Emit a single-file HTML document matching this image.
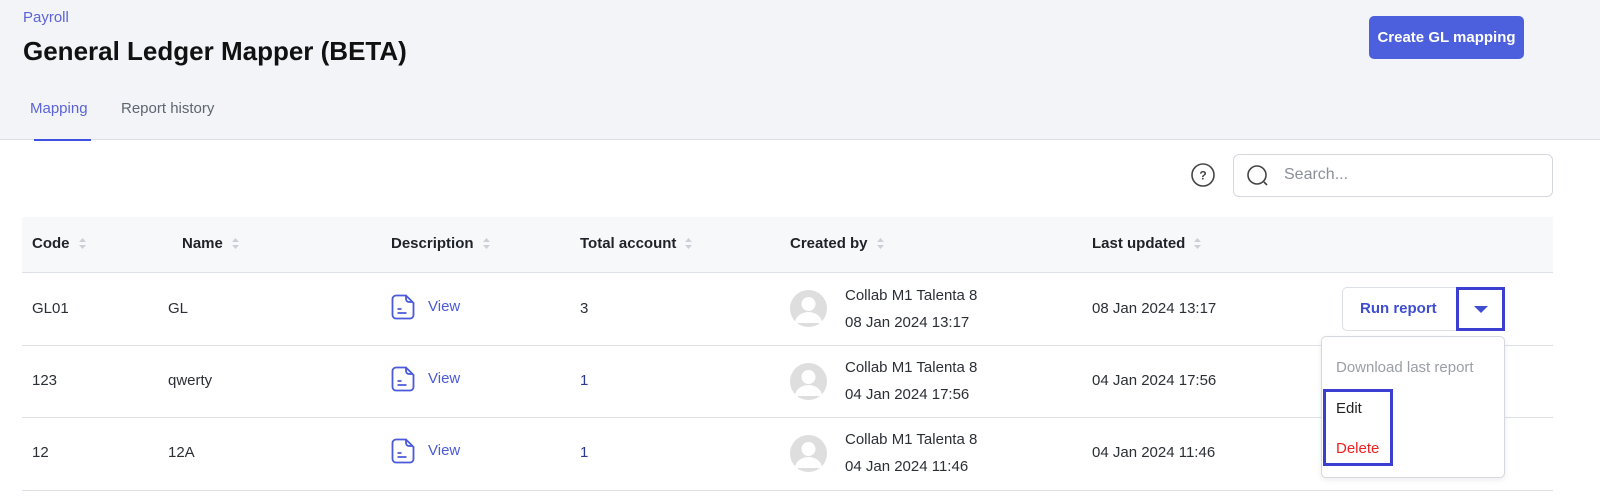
<!DOCTYPE html>
<html><head><meta charset="utf-8"><style>
*{margin:0;padding:0;box-sizing:border-box}
body{width:1600px;height:502px;overflow:hidden;background:#fff;font-family:"Liberation Sans",sans-serif;color:#1f2328;position:relative}
.a{position:absolute;white-space:nowrap}
.hdr{position:absolute;left:0;top:0;width:1600px;height:140px;background:#f2f4f8;border-bottom:1px solid #dcdfe6}
.th{font-weight:bold;font-size:15px;color:#1f2328;top:235px}
.sort{display:inline-block;margin-left:9px;vertical-align:middle;width:7px;height:11px;position:relative;top:-1px}
.td{font-size:15px;color:#2b2f36}
.link{color:#4a5ad9;font-size:15px}
.line{position:absolute;left:22px;width:1531px;height:1px;background:#dde0e6}
</style></head><body>
<div class="hdr"></div>
<div class="a" style="left:23px;top:9px;font-size:15px;color:#5b63d8">Payroll</div>
<div class="a" style="left:23px;top:36px;font-size:26px;font-weight:bold;color:#111">General Ledger Mapper (BETA)</div>
<div class="a" style="left:1369px;top:16px;width:155px;height:43px;background:#4c5fdc;border-radius:5px;color:#fff;font-weight:bold;font-size:15px;line-height:43px;text-align:center">Create GL mapping</div>
<div class="a" style="left:30px;top:100px;font-size:15px;color:#5b63d8">Mapping</div>
<div class="a" style="left:34px;top:139px;width:57px;height:2px;background:#3d52e0"></div>
<div class="a" style="left:121px;top:100px;font-size:15px;color:#5f6570">Report history</div>

<svg class="a" style="left:1191px;top:163px" width="24" height="24" viewBox="0 0 24 24"><circle cx="12" cy="12" r="11" fill="none" stroke="#444" stroke-width="1.6"/><text x="12" y="16.5" text-anchor="middle" font-size="12" font-weight="bold" font-family="Liberation Sans" fill="#444">?</text></svg>
<div class="a" style="left:1233px;top:154px;width:320px;height:43px;border:1px solid #d5d8de;border-radius:6px"></div>
<svg class="a" style="left:1246px;top:164px" width="24" height="24" viewBox="0 0 24 24"><circle cx="11" cy="11" r="9" fill="none" stroke="#444" stroke-width="1.6"/><path d="M18 18l3 3" stroke="#444" stroke-width="1.6"/></svg>
<div class="a" style="left:1284px;top:166px;font-size:16px;color:#8a8f98">Search...</div>

<div class="a" style="left:22px;top:217px;width:1531px;height:55px;background:#f7f8fa"></div>
<div class="line" style="top:272px"></div>
<div class="line" style="top:345px"></div>
<div class="line" style="top:417px"></div>
<div class="line" style="top:490px"></div>

<div class="a th" style="left:32px">Code<svg class="sort" viewBox="0 0 7 11"><path d="M0 4L3.5 0L7 4Z M0 7L3.5 11L7 7Z" fill="#ccd0d6"/></svg></div>
<div class="a th" style="left:182px">Name<svg class="sort" viewBox="0 0 7 11"><path d="M0 4L3.5 0L7 4Z M0 7L3.5 11L7 7Z" fill="#ccd0d6"/></svg></div>
<div class="a th" style="left:391px">Description<svg class="sort" viewBox="0 0 7 11"><path d="M0 4L3.5 0L7 4Z M0 7L3.5 11L7 7Z" fill="#ccd0d6"/></svg></div>
<div class="a th" style="left:580px">Total account<svg class="sort" viewBox="0 0 7 11"><path d="M0 4L3.5 0L7 4Z M0 7L3.5 11L7 7Z" fill="#ccd0d6"/></svg></div>
<div class="a th" style="left:790px">Created by<svg class="sort" viewBox="0 0 7 11"><path d="M0 4L3.5 0L7 4Z M0 7L3.5 11L7 7Z" fill="#ccd0d6"/></svg></div>
<div class="a th" style="left:1092px">Last updated<svg class="sort" viewBox="0 0 7 11"><path d="M0 4L3.5 0L7 4Z M0 7L3.5 11L7 7Z" fill="#ccd0d6"/></svg></div>

<div class="a td" style="left:32px;top:300px">GL01</div>
<div class="a td" style="left:168px;top:300px">GL</div>
<div class="a td" style="left:580px;top:300px">3</div>
<div class="a td" style="left:32px;top:372px">123</div>
<div class="a td" style="left:168px;top:372px">qwerty</div>
<div class="a td" style="left:580px;top:372px;color:#2b3a8c">1</div>
<div class="a td" style="left:32px;top:444px">12</div>
<div class="a td" style="left:168px;top:444px">12A</div>
<div class="a td" style="left:580px;top:444px;color:#2b3a8c">1</div>

<svg class="a" style="left:391px;top:294px" width="24" height="26" viewBox="0 0 24 26"><path d="M5 1.5H15L22.5 9V21a3.5 3.5 0 0 1-3.5 3.5H5A3.5 3.5 0 0 1 1.5 21V5A3.5 3.5 0 0 1 5 1.5Z" fill="none" stroke="#4a5ad9" stroke-width="1.8"/><path d="M15 2v3a3 3 0 0 0 3 3h4M6.5 15h4M6.5 19h9" fill="none" stroke="#4a5ad9" stroke-width="1.8"/></svg>
<div class="a link" style="left:428px;top:298px">View</div>
<svg class="a" style="left:391px;top:366px" width="24" height="26" viewBox="0 0 24 26"><path d="M5 1.5H15L22.5 9V21a3.5 3.5 0 0 1-3.5 3.5H5A3.5 3.5 0 0 1 1.5 21V5A3.5 3.5 0 0 1 5 1.5Z" fill="none" stroke="#4a5ad9" stroke-width="1.8"/><path d="M15 2v3a3 3 0 0 0 3 3h4M6.5 15h4M6.5 19h9" fill="none" stroke="#4a5ad9" stroke-width="1.8"/></svg>
<div class="a link" style="left:428px;top:370px">View</div>
<svg class="a" style="left:391px;top:438px" width="24" height="26" viewBox="0 0 24 26"><path d="M5 1.5H15L22.5 9V21a3.5 3.5 0 0 1-3.5 3.5H5A3.5 3.5 0 0 1 1.5 21V5A3.5 3.5 0 0 1 5 1.5Z" fill="none" stroke="#4a5ad9" stroke-width="1.8"/><path d="M15 2v3a3 3 0 0 0 3 3h4M6.5 15h4M6.5 19h9" fill="none" stroke="#4a5ad9" stroke-width="1.8"/></svg>
<div class="a link" style="left:428px;top:442px">View</div>

<svg class="a" style="left:790px;top:290px" width="37" height="37" viewBox="0 0 37 37"><circle cx="18.5" cy="18.5" r="18.5" fill="#dedede"/><circle cx="18.5" cy="14" r="7" fill="#fff"/><path d="M5 33a13.5 11 0 0 1 27 0Z" fill="#fff"/></svg>
<svg class="a" style="left:790px;top:363px" width="37" height="37" viewBox="0 0 37 37"><circle cx="18.5" cy="18.5" r="18.5" fill="#dedede"/><circle cx="18.5" cy="14" r="7" fill="#fff"/><path d="M5 33a13.5 11 0 0 1 27 0Z" fill="#fff"/></svg>
<svg class="a" style="left:790px;top:435px" width="37" height="37" viewBox="0 0 37 37"><circle cx="18.5" cy="18.5" r="18.5" fill="#dedede"/><circle cx="18.5" cy="14" r="7" fill="#fff"/><path d="M5 33a13.5 11 0 0 1 27 0Z" fill="#fff"/></svg>
<div class="a td" style="left:845px;top:287px">Collab M1 Talenta 8</div>
<div class="a td" style="left:845px;top:314px">08 Jan 2024 13:17</div>
<div class="a td" style="left:845px;top:359px">Collab M1 Talenta 8</div>
<div class="a td" style="left:845px;top:386px">04 Jan 2024 17:56</div>
<div class="a td" style="left:845px;top:431px">Collab M1 Talenta 8</div>
<div class="a td" style="left:845px;top:458px">04 Jan 2024 11:46</div>
<div class="a td" style="left:1092px;top:300px">08 Jan 2024 13:17</div>
<div class="a td" style="left:1092px;top:372px">04 Jan 2024 17:56</div>
<div class="a td" style="left:1092px;top:444px">04 Jan 2024 11:46</div>

<div class="a" style="left:1342px;top:287px;width:163px;height:44px;border:1px solid #dcdfe5;border-radius:5px;background:#fff"></div>
<div class="a" style="left:1360px;top:300px;font-size:15px;font-weight:bold;color:#3e4ecf">Run report</div>
<div class="a" style="left:1456px;top:287px;width:49px;height:44px;border:3px solid #3a3fd1"></div>
<svg class="a" style="left:1474px;top:306px" width="14" height="8" viewBox="0 0 14 8"><path d="M0 0H14L7 7Z" fill="#3e4ecf"/></svg>

<div class="a" style="left:1321px;top:336px;width:184px;height:142px;border:1px solid #d5d8de;border-radius:5px;background:#fff;box-shadow:0 2px 6px rgba(0,0,0,.08)"></div>
<div class="a" style="left:1336px;top:359px;font-size:15px;color:#9a9ea6">Download last report</div>
<div class="a" style="left:1323px;top:389px;width:70px;height:77px;border:3px solid #3a3fd1"></div>
<div class="a" style="left:1336px;top:400px;font-size:15px;color:#222">Edit</div>
<div class="a" style="left:1336px;top:440px;font-size:15px;color:#f02020">Delete</div>
</body></html>
